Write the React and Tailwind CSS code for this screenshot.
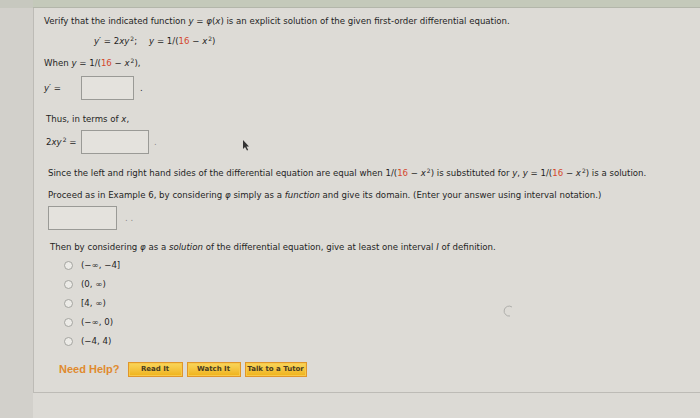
import { useState } from 'react';

const options = ['(−∞, −4]', '(0, ∞)', '[4, ∞)', '(−∞, 0)', '(−4, 4)'];

function Red({ children }) {
    return <span className="text-[#d4472c]">{children}</span>;
}

function Sq() {
    return <sup className="text-[6px] ml-[1px]">2</sup>;
}

function AnswerBox({ className }) {
    return <div className={`shrink-0 border border-[#9a9a96] bg-[#e4e2dd] h-[24px] ${className}`}></div>;
}

function HelpButton({ label, width }) {
    return (
        <button className={`${width} h-[15px] whitespace-nowrap border border-[#e0962a] bg-gradient-to-b from-[#f9d65a] to-[#efb212] text-[7px] font-bold text-[#4a3d22] leading-none shadow-[inset_0_0_0_1px_#f7c94a]`}>
            {label}
        </button>
    );
}

export default function App() {
    const [picked, setPicked] = useState(null);

    return (
        <div className="w-[700px] h-[418px] overflow-hidden bg-[#d3d1cc] text-[#1f1f1f] font-['DejaVu_Sans',Verdana,sans-serif] text-[8.6px] whitespace-nowrap flex flex-col">
            {/* top strip */}
            <div className="h-[8px] flex shrink-0">
                <div className="w-[33px] bg-[#c7c8bf]"></div>
                <div className="flex-1 bg-[#c4c9ba] border-b border-[#b3b6aa]"></div>
            </div>

            <div className="flex flex-1">
                <div className="w-[33px] shrink-0 bg-[#d2d0cb]"></div>

                <div className="flex-1 flex flex-col">
                    {/* question panel */}
                    <div className="relative border-l border-b border-[#bdbbb6] bg-[#dddbd6] pl-[10px] pt-[4px] pb-[15px] flex flex-col">
                        <div className="h-[18px] flex items-center">
                            <span>Verify that the indicated function <i>y</i> = <i>φ</i>(<i>x</i>) is an explicit solution of the given first-order differential equation.</span>
                        </div>
                        <div className="h-[22px] flex items-center pl-[50px] gap-[12px]">
                            <span><i>y</i>′ = 2<i>xy</i><Sq />;</span>
                            <span><i>y</i> = 1/(<Red>16</Red> − <i>x</i><Sq />)</span>
                        </div>
                        <div className="h-[22px] flex items-center">
                            <span>When <i>y</i> = 1/(<Red>16</Red> − <i>x</i><Sq />),</span>
                        </div>
                        <div className="h-[28px] flex items-center gap-[6px]">
                            <span className="w-[31px]"><i>y</i>′ =</span>
                            <AnswerBox className="w-[53px]" />
                            <span>.</span>
                        </div>
                        <div className="h-[6px]"></div>
                        <div className="h-[22px] flex items-center pl-[2px]">
                            <span>Thus, in terms of <i>x</i>,</span>
                        </div>
                        <div className="h-[24px] flex items-center gap-[5px] pl-[2px]">
                            <span className="w-[30px] shrink-0">2<i>xy</i><Sq /> =</span>
                            <AnswerBox className="w-[68px] h-[23px]" />
                            <span className="text-[#8a8a86]">.</span>
                        </div>
                        <div className="h-[8px]"></div>
                        <div className="h-[22px] flex items-center pl-[4px]">
                            <span>Since the left and right hand sides of the differential equation are equal when 1/(<Red>16</Red> − <i>x</i><Sq />) is substituted for <i>y</i>, <i>y</i> = 1/(<Red>16</Red> − <i>x</i><Sq />) is a solution.</span>
                        </div>
                        <div className="h-[22px] flex items-center pl-[4px]">
                            <span>Proceed as in Example 6, by considering <i>φ</i> simply as a <i>function</i> and give its domain. (Enter your answer using interval notation.)</span>
                        </div>
                        <div className="h-[24px] flex items-center gap-[8px] pl-[4px]">
                            <AnswerBox className="w-[69px]" />
                            <span className="text-[#8a8a86]">. .</span>
                        </div>
                        <div className="h-[8px]"></div>
                        <div className="h-[18px] flex items-center pl-[6px]">
                            <span>Then by considering <i>φ</i> as a <i>solution</i> of the differential equation, give at least one interval <i>I</i> of definition.</span>
                        </div>
                        {options.map((opt, i) => (
                            <label key={opt} onClick={() => setPicked(i)} className="h-[19px] flex items-center gap-[8px] pl-[20px] cursor-pointer">
                                <span className={`w-[9px] h-[9px] rounded-full border border-[#a4a4a0] ${picked === i ? 'bg-[#555]' : 'bg-[#ecebe7]'}`}></span>
                                <span>{opt}</span>
                            </label>
                        ))}
                        <div className="h-[10px]"></div>
                        <div className="h-[16px] flex items-center gap-[4px] pl-[15px]">
                            <span className="font-['Liberation_Sans',Arial,sans-serif] font-bold text-[11px] text-[#e08a2e] mr-[4px]">Need Help?</span>
                            <HelpButton label="Read It" width="w-[55px]" />
                            <HelpButton label="Watch It" width="w-[54px]" />
                            <HelpButton label="Talk to a Tutor" width="w-[62px]" />
                        </div>

                        {/* mouse cursor */}
                        <svg className="absolute left-[208px] top-[132px]" width="8" height="11" viewBox="0 0 8 11">
                            <path d="M1 0 L1 9 L3 7 L5 10.5 L6.2 10 L4.4 6.6 L7 6.4 Z" fill="#333" />
                        </svg>
                        {/* faint spinner remnant */}
                        <svg className="absolute left-[467px] top-[296px]" width="14" height="14" viewBox="0 0 14 14">
                            <path d="M11 3 A5 5 0 1 0 9 12" fill="none" stroke="#a9a9a6" strokeWidth="0.9" />
                        </svg>
                    </div>
                    <div className="flex-1 bg-[#dcdad5]"></div>
                </div>
            </div>
        </div>
    );
}
